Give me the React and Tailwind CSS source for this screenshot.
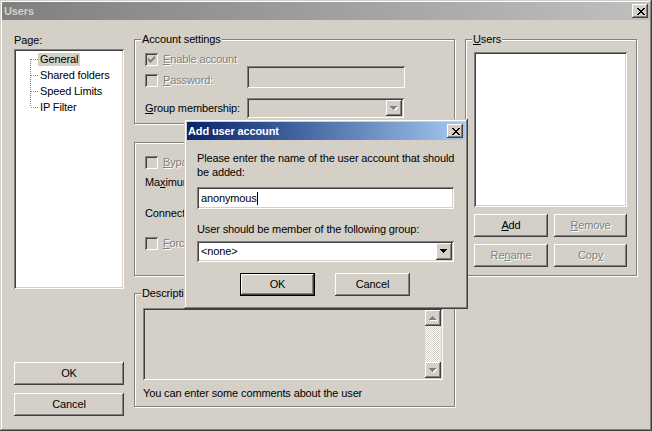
import React from "react";

const RAISED =
  "shadow-[inset_-1px_-1px_#404040,inset_1px_1px_#fff,inset_-2px_-2px_#808080,inset_2px_2px_#d4d0c8]";
const WINFRAME =
  "shadow-[inset_-1px_-1px_#404040,inset_1px_1px_#d4d0c8,inset_-2px_-2px_#808080,inset_2px_2px_#fff]";
const SUNKEN =
  "shadow-[inset_1px_1px_#808080,inset_-1px_-1px_#fff,inset_2px_2px_#404040,inset_-2px_-2px_#d4d0c8]";
const DIS = "text-[#808080] [text-shadow:1px_1px_0_#fff]";

function DownArrow({ color = "#000", shadow = false }) {
  const d = "M0 0h7v1h-1v1h-1v1h-1v1h-1v-1h-1v-1h-1v-1h-1z";
  return (
    <svg width="8" height="5" viewBox="0 0 8 5" shapeRendering="crispEdges">
      {shadow && <path d={d} fill="#fff" transform="translate(1 1)" />}
      <path d={d} fill={color} />
    </svg>
  );
}

function UpArrow({ color = "#000", shadow = false }) {
  const d = "M3 0h1v1h1v1h1v1h1v1h-7v-1h1v-1h1v-1h1z";
  return (
    <svg width="8" height="5" viewBox="0 0 8 5" shapeRendering="crispEdges">
      {shadow && <path d={d} fill="#fff" transform="translate(1 1)" />}
      <path d={d} fill={color} />
    </svg>
  );
}

function CloseX() {
  return (
    <svg width="8" height="7" viewBox="0 0 8 7" shapeRendering="crispEdges">
      <path
        d="M0 0h2v1h1v1h2v-1h1v-1h2v1h-1v1h-1v1h-1v1h1v1h1v1h1v1h-2v-1h-1v-1h-2v1h-1v1h-2v-1h1v-1h1v-1h1v-1h-1v-1h-1v-1h-1z"
        fill="#000"
      />
    </svg>
  );
}

function CloseBtn() {
  return (
    <div className={`w-[16px] h-[14px] bg-[#d4d0c8] ${RAISED} flex items-center justify-center pl-[1px]`}>
      <CloseX />
    </div>
  );
}

function Btn({ children, className = "", disabled = false, def = false }) {
  return (
    <div
      className={`bg-[#d4d0c8] flex items-center justify-center ${def ? "border border-black" : ""} ${className}`}
    >
      <div className={`w-full h-full flex items-center justify-center ${RAISED} ${disabled ? DIS : ""}`}>
        {children}
      </div>
    </div>
  );
}

function Check({ checked = false }) {
  return (
    <span className={`block w-[13px] h-[13px] bg-[#d4d0c8] ${SUNKEN} shrink-0`}>
      {checked && (
        <svg width="13" height="13" viewBox="0 0 13 13">
          <path
            d="M3.5 5v3M4.5 6v3M5.5 7v3M6.5 6v3M7.5 5v3M8.5 4v3M9.5 3v3"
            stroke="#808080"
            strokeWidth="1"
          />
        </svg>
      )}
    </span>
  );
}

function Group({ legend, className = "", legendClass = "", children }) {
  return (
    <div
      className={`relative border border-[#808080] shadow-[1px_1px_0_#fff,inset_1px_1px_0_#fff] ${className}`}
    >
      {legend && (
        <span
          className={`absolute left-[6px] -top-[7px] bg-[#d4d0c8] px-[1px] leading-[13px] whitespace-nowrap ${legendClass}`}
        >
          {legend}
        </span>
      )}
      {children}
    </div>
  );
}

function TreeRow({ label, first = false, last = false, selected = false }) {
  return (
    <div className="h-[16px] flex items-center">
      <svg width="22" height="16" viewBox="0 0 22 16" className="shrink-0">
        <path
          d={`M14.5 ${first ? 8 : 0}V${last ? 8 : 16}M15 8.5H22`}
          stroke="#808080"
          strokeWidth="1"
          strokeDasharray="1 1"
        />
      </svg>
      <span className={`px-[2px] leading-[13px] whitespace-nowrap ${selected ? "bg-[#d4d0c8]" : ""}`}>
        {label}
      </span>
    </div>
  );
}

function U({ children }) {
  return <span className="underline underline-offset-[1px]">{children}</span>;
}

export default function App() {
  return (
    <div
      className={`relative w-[652px] h-[431px] bg-[#d4d0c8] ${WINFRAME} p-[2px] flex flex-col overflow-hidden font-['Liberation_Sans','Arial',sans-serif] text-[11px] leading-[13px] tracking-[-0.13px] text-black`}
    >
      {/* Title bar */}
      <div className="h-[18px] shrink-0 flex items-center justify-between bg-gradient-to-r from-[#808080] to-[#c0c0c0] pl-[2px] pr-[2px]">
        <span className="font-bold text-[#d4d0c8] text-[11px]">Users</span>
        <CloseBtn />
      </div>

      {/* Content */}
      <div className="flex flex-1 pl-[12px]">
        {/* Left column */}
        <div className="w-[110px] flex flex-col">
          <div className="mt-[14px] h-[13px]">Page:</div>
          <div className={`mt-[2px] h-[240px] bg-white ${SUNKEN} p-[2px]`}>
            <TreeRow label="General" first selected />
            <TreeRow label="Shared folders" />
            <TreeRow label="Speed Limits" />
            <TreeRow label="IP Filter" last />
          </div>
          <Btn className="mt-[73px] h-[23px] w-[110px]">OK</Btn>
          <Btn className="mt-[8px] h-[23px] w-[110px]">Cancel</Btn>
        </div>

        {/* Middle column */}
        <div className="ml-[10px] w-[321px] flex flex-col">
          <Group legend="Account settings" className="mt-[19px] h-[85px]">
            <div className="pt-[13px] pl-[10px] flex flex-col">
              <div className="h-[13px] flex items-center">
                <Check checked />
                <span className={`ml-[5px] ${DIS}`}>
                  <U>E</U>nable account
                </span>
              </div>
              <div className="h-[22px] flex">
                <div className="w-[102px] flex items-start pt-[8px]">
                  <Check />
                  <span className={`ml-[5px] ${DIS}`}>
                    <U>P</U>assword:
                  </span>
                </div>
                <div className={`w-[158px] h-[22px] bg-[#d4d0c8] ${SUNKEN}`} />
              </div>
              <div className="mt-[10px] h-[20px] flex items-center">
                <div className="w-[102px] whitespace-nowrap">
                  <U>G</U>roup membership:
                </div>
                <div className={`w-[157px] h-[20px] bg-[#d4d0c8] ${SUNKEN} p-[2px] flex justify-end`}>
                  <div className={`w-[16px] h-[16px] bg-[#d4d0c8] ${RAISED} flex items-center justify-center`}>
                    <DownArrow color="#808080" shadow />
                  </div>
                </div>
              </div>
            </div>
          </Group>

          <Group className="mt-[18px] h-[134px]">
            <div className="pt-[13px] pl-[10px] w-[49px] overflow-hidden flex flex-col whitespace-nowrap">
              <div className="h-[13px] flex items-center">
                <Check />
                <span className={`ml-[5px] ${DIS}`}>
                  <U>B</U>ypass userlimit of server
                </span>
              </div>
              <div className="mt-[7px] h-[13px]">
                Ma<U>x</U>imum connection count:
              </div>
              <div className="mt-[18px] h-[13px]">Connection limit per IP:</div>
              <div className="mt-[17px] h-[13px] flex items-center">
                <Check />
                <span className={`ml-[5px] ${DIS}`}>
                  <U>F</U>orce SSL for user login
                </span>
              </div>
            </div>
          </Group>

          <Group
            legend="Description"
            legendClass="max-w-[43px] overflow-hidden"
            className="mt-[17px] h-[114px]"
          >
            <div className="pt-[14px] pl-[8px] flex flex-col">
              <div className={`w-[300px] h-[72px] bg-[#d4d0c8] ${SUNKEN} p-[2px] flex justify-end`}>
                <div className="w-[16px] h-full flex flex-col">
                  <div className={`w-[16px] h-[16px] bg-[#d4d0c8] ${RAISED} flex items-center justify-center`}>
                    <UpArrow color="#808080" shadow />
                  </div>
                  <div className="flex-1 bg-[repeating-conic-gradient(#d4d0c8_0_25%,#ffffff_0_50%)] bg-[length:2px_2px]" />
                  <div className={`w-[16px] h-[16px] bg-[#d4d0c8] ${RAISED} flex items-center justify-center`}>
                    <DownArrow color="#808080" shadow />
                  </div>
                </div>
              </div>
              <div className="mt-[7px] h-[13px] whitespace-nowrap">
                You can enter some comments about the user
              </div>
            </div>
          </Group>
        </div>

        {/* Right column */}
        <div className="ml-[10px] w-[172px] flex flex-col">
          <Group
            legend={
              <>
                <U>U</U>sers
              </>
            }
            className="mt-[19px] h-[237px]"
          >
            <div className="pt-[12px] pl-[8px] flex flex-col">
              <div className={`w-[153px] h-[155px] bg-white ${SUNKEN}`} />
              <div className="mt-[7px] flex gap-[6px]">
                <Btn className="w-[74px] h-[23px]">
                  <span>
                    <U>A</U>dd
                  </span>
                </Btn>
                <Btn className="w-[73px] h-[23px]" disabled>
                  <span>
                    <U>R</U>emove
                  </span>
                </Btn>
              </div>
              <div className="mt-[7px] flex gap-[6px]">
                <Btn className="w-[74px] h-[23px]" disabled>
                  <span>
                    Re<U>n</U>ame
                  </span>
                </Btn>
                <Btn className="w-[73px] h-[23px]" disabled>
                  <span>
                    Cop<U>y</U>
                  </span>
                </Btn>
              </div>
            </div>
          </Group>
        </div>
      </div>

      {/* Modal dialog */}
      <div
        className={`absolute left-[184px] top-[119px] w-[284px] h-[190px] bg-[#d4d0c8] ${WINFRAME} p-[3px] flex flex-col`}
      >
        <div className="h-[18px] shrink-0 flex items-center justify-between bg-gradient-to-r from-[#0a246a] to-[#a6caf0] pl-[1px] pr-[2px]">
          <span className="font-bold text-white text-[11px]">Add user account</span>
          <CloseBtn />
        </div>
        <div className="pl-[10px] flex flex-col">
          <div className="mt-[11px] leading-[14px] whitespace-nowrap">
            Please enter the name of the user account that should
            <br />
            be added:
          </div>
          <div className={`mt-[8px] w-[257px] h-[22px] bg-white ${SUNKEN} pl-[4px] flex items-center`}>
            <span>anonymous</span>
            <span className="w-[1px] h-[13px] bg-black" />
          </div>
          <div className="mt-[14px] h-[13px] whitespace-nowrap">
            User should be member of the following group:
          </div>
          <div className={`mt-[5px] w-[257px] h-[21px] bg-white ${SUNKEN} p-[2px] flex items-center justify-between`}>
            <span className="pl-[2px]">&lt;none&gt;</span>
            <div className={`w-[16px] h-[17px] bg-[#d4d0c8] ${RAISED} flex items-center justify-center`}>
              <DownArrow />
            </div>
          </div>
          <div className="mt-[11px] ml-[43px] flex gap-[20px]">
            <Btn className="w-[75px] h-[23px]" def>
              OK
            </Btn>
            <Btn className="w-[75px] h-[23px]">Cancel</Btn>
          </div>
        </div>
      </div>
    </div>
  );
}
